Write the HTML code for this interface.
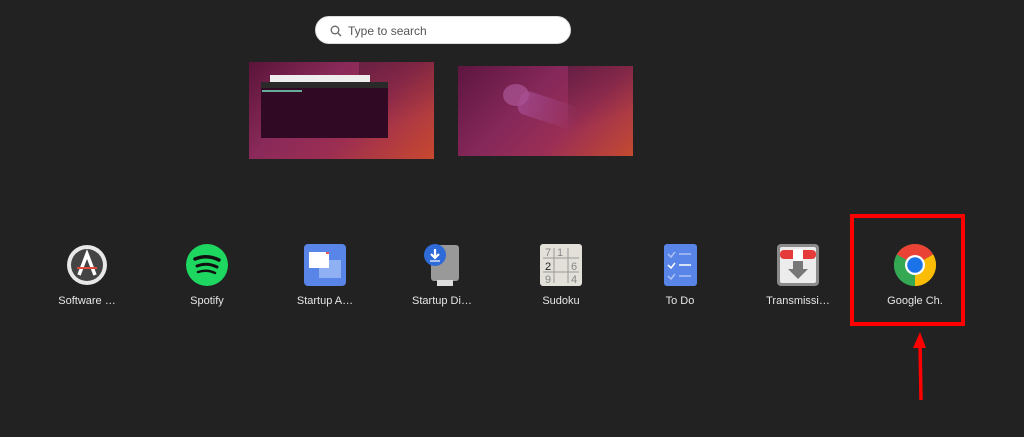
<!DOCTYPE html>
<html><head><meta charset="utf-8"><style>
html,body{margin:0;padding:0;width:1024px;height:437px;background:#222222;overflow:hidden;font-family:"Liberation Sans",sans-serif}
.abs{position:absolute}
.search{left:315px;top:16px;width:256px;height:28px;background:#fff;border-radius:14px;box-sizing:border-box;border:1px solid #ddd}
.search span{position:absolute;left:32px;top:7px;font-size:12px;color:#555}
.th1{left:249px;top:62px;width:185px;height:97px;background:linear-gradient(135deg,#5a1438 0%,#8a2a5a 35%,#9a2d52 60%,#c8492f 100%);overflow:hidden}
.th2{left:458px;top:66px;width:175px;height:90px;background:linear-gradient(135deg,#5d1640 0%,#86285a 40%,#9a2e55 65%,#c44a30 100%);overflow:hidden}
.app{position:absolute;top:243px;width:110px;text-align:center}
.app svg{display:block;margin:0 auto}
.app .l{margin-top:8px;font-size:11px;color:#e6e6e6;white-space:nowrap}
</style></head><body>
<div class="abs search"><svg class="abs" style="left:14px;top:8px" width="12" height="12" viewBox="0 0 12 12"><circle cx="5" cy="5" r="3.8" fill="none" stroke="#666" stroke-width="1.3"/><line x1="8" y1="8" x2="11" y2="11" stroke="#666" stroke-width="1.3"/></svg><span>Type to search</span></div>

<div class="abs th1">
 <div class="abs" style="left:110px;top:0;width:80px;height:100px;background:linear-gradient(160deg,rgba(0,0,0,0.25),rgba(0,0,0,0) 60%)"></div>
 <div class="abs" style="left:21px;top:13px;width:100px;height:7px;background:#eee"></div>
 <div class="abs" style="left:12px;top:20px;width:127px;height:6px;background:#2a2a2a"></div>
 <div class="abs" style="left:12px;top:26px;width:127px;height:50px;background:#300a24"></div>
 <div class="abs" style="left:13px;top:28px;width:40px;height:2px;background:#6a9"></div>
</div>
<div class="abs th2">
 <div class="abs" style="left:110px;top:0;width:70px;height:90px;background:linear-gradient(160deg,rgba(0,0,0,0.25),rgba(0,0,0,0) 60%)"></div>
 <div class="abs" style="left:45px;top:18px;width:26px;height:22px;border-radius:50%;background:#a5508f;opacity:.8"></div>
 <div class="abs" style="left:60px;top:32px;width:60px;height:24px;transform:rotate(18deg);background:linear-gradient(90deg,rgba(170,80,150,.7),rgba(170,80,150,0));border-radius:8px"></div>
</div>

<!-- apps -->
<div class="app" style="left:32px"><svg width="44" height="44" viewBox="0 0 44 44"><circle cx="22" cy="22" r="20" fill="#e8e8e8"/><circle cx="22" cy="22" r="16" fill="#444"/><path d="M14 32 L22 11 L30 32" fill="none" stroke="#fff" stroke-width="3.5"/><line x1="12" y1="25" x2="32" y2="25" stroke="#e04a3a" stroke-width="2"/></svg><div class="l">Software …</div></div>
<div class="app" style="left:152px"><svg width="44" height="44" viewBox="0 0 44 44"><circle cx="22" cy="22" r="21" fill="#1ed760"/><path d="M10 16 Q22 11 34 17" stroke="#111" stroke-width="3.5" fill="none" stroke-linecap="round"/><path d="M12 23 Q22 19 32 24" stroke="#111" stroke-width="3" fill="none" stroke-linecap="round"/><path d="M13 29 Q22 26 30 30" stroke="#111" stroke-width="2.5" fill="none" stroke-linecap="round"/></svg><div class="l">Spotify</div></div>
<div class="app" style="left:270px"><svg width="44" height="44" viewBox="0 0 44 44"><rect x="1" y="1" width="42" height="42" rx="4" fill="#5a85e8"/><rect x="16" y="17" width="22" height="18" fill="#8fb0f2"/><rect x="6" y="9" width="20" height="16" fill="#fff"/><rect x="23" y="9" width="3" height="2" fill="#e55"/></svg><div class="l">Startup A…</div></div>
<div class="app" style="left:387px"><svg width="44" height="44" viewBox="0 0 44 44"><rect x="11" y="2" width="28" height="36" rx="3" fill="#999"/><rect x="17" y="37" width="16" height="6" fill="#ddd"/><circle cx="15" cy="12" r="11" fill="#2e6bd8"/><path d="M15 6 V14 M11 11 L15 15 L19 11" stroke="#fff" stroke-width="2.2" fill="none"/><line x1="10" y1="18" x2="20" y2="18" stroke="#fff" stroke-width="1.2"/></svg><div class="l">Startup Di…</div></div>
<div class="app" style="left:506px"><svg width="44" height="44" viewBox="0 0 44 44"><rect x="1" y="1" width="42" height="42" rx="3" fill="#e2e0d8"/><g stroke="#999" stroke-width="1"><line x1="15" y1="5" x2="15" y2="40"/><line x1="29" y1="5" x2="29" y2="40"/><line x1="4" y1="15" x2="40" y2="15"/><line x1="4" y1="29" x2="40" y2="29"/></g><g font-family="Liberation Sans" font-size="11" fill="#888"><text x="6" y="13">7</text><text x="18" y="13">1</text><text x="6" y="27" fill="#222">2</text><text x="32" y="27">6</text><text x="6" y="40">9</text><text x="32" y="40">4</text></g></svg><div class="l">Sudoku</div></div>
<div class="app" style="left:625px"><svg width="44" height="44" viewBox="0 0 44 44"><rect x="6" y="1" width="33" height="42" rx="3" fill="#5a85e8"/><g stroke="#fff" stroke-width="1.5" fill="none"><path d="M10 11 L13 14 L17 9" opacity=".5"/><path d="M10 22 L13 25 L17 20"/><path d="M10 33 L13 36 L17 31" opacity=".5"/><line x1="21" y1="11" x2="33" y2="11" opacity=".5"/><line x1="21" y1="22" x2="33" y2="22"/><line x1="21" y1="33" x2="33" y2="33" opacity=".5"/></g></svg><div class="l">To Do</div></div>
<div class="app" style="left:743px"><svg width="44" height="44" viewBox="0 0 44 44"><rect x="1" y="1" width="42" height="42" rx="4" fill="#8a8a8a"/><rect x="4" y="4" width="36" height="36" rx="2" fill="#ececec"/><rect x="4" y="7" width="36" height="9" rx="4" fill="#e53a3a"/><rect x="17" y="6" width="10" height="12" fill="#fff"/><path d="M17 18 H27 V26 H32 L22 36 L12 26 H17 Z" fill="#777"/></svg><div class="l">Transmissi…</div></div>
<div class="app" style="left:860px"><svg width="44" height="44" viewBox="0 0 44 44"><circle cx="22" cy="22" r="21" fill="#34a853"/><path d="M22 22 L3.8 11.5 A21 21 0 0 1 40.2 11.5 Z" fill="#ea4335"/><path d="M22 22 L40.2 11.5 A21 21 0 0 1 22 43 Z" fill="#fbbc04"/><path d="M22 22 L3.8 11.5 A21 21 0 0 0 22 43 Z" fill="#34a853"/><circle cx="22" cy="22" r="10" fill="#fff"/><circle cx="22" cy="22" r="7.8" fill="#1a73e8"/></svg><div class="l">Google Ch.</div></div>

<!-- highlight -->
<div class="abs" style="left:850px;top:214px;width:115px;height:112px;box-sizing:border-box;border:4px solid #ff0000"></div>
<svg class="abs" style="left:905px;top:328px" width="30" height="75" viewBox="0 0 30 75"><line x1="15" y1="14" x2="16" y2="72" stroke="#ff0000" stroke-width="3.5"/><path d="M8 20 L15 4 L21 20 Z" fill="#ff0000"/></svg>
</body></html>
